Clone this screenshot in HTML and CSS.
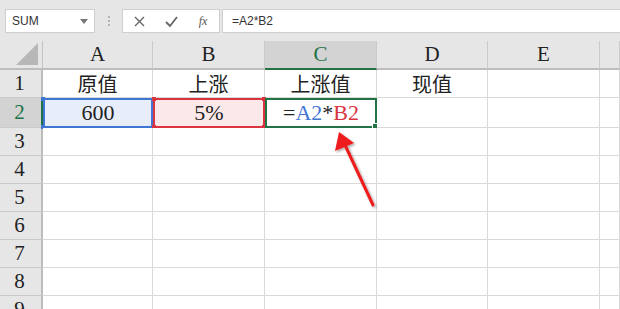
FILE: index.html
```html
<!DOCTYPE html>
<html lang="zh">
<head>
    <meta charset="UTF-8">
    <title>上涨值</title>
    <link rel="stylesheet" href="styles.css">
</head>
<body>
<div class="toolbar">
    <div class="namebox">
        <span>SUM</span>
        <svg class="caret" width="8" height="5" viewBox="0 0 8 5"><path d="M0 0h8L4 5z" fill="#777"/></svg>
    </div>
    <div class="grip"><i></i><i></i><i></i></div>
    <div class="fx-group">
        <span class="fx-btn">
            <svg width="11" height="11" viewBox="0 0 11 11"><path d="M1 1l9 9M10 1l-9 9" stroke="#666" stroke-width="1.4"/></svg>
        </span>
        <span class="fx-btn">
            <svg width="13" height="11" viewBox="0 0 13 11"><path d="M1 6l4 4 7-9" stroke="#666" stroke-width="1.8" fill="none"/></svg>
        </span>
        <span class="fx-btn fx-label">fx</span>
    </div>
    <div class="formula">=A2*B2</div>
</div>

<div class="sheet">
    <div class="corner"><span class="tri"></span></div>
    <div class="col-head">A</div>
    <div class="col-head">B</div>
    <div class="col-head active">C</div>
    <div class="col-head">D</div>
    <div class="col-head">E</div>
    <div class="col-head"></div>

    <div class="row-head">1</div>
    <div class="cell cjk">原值</div>
    <div class="cell cjk">上涨</div>
    <div class="cell cjk">上涨值</div>
    <div class="cell cjk">现值</div>
    <div class="cell"></div>
    <div class="cell"></div>

    <div class="row-head active">2</div>
    <div class="cell ref-a">600</div>
    <div class="cell ref-b">5%</div>
    <div class="cell editing">=<span class="blue">A2</span>*<span class="red">B2</span></div>
    <div class="cell"></div>
    <div class="cell"></div>
    <div class="cell"></div>

    <div class="row-head">3</div>
    <div class="cell"></div><div class="cell"></div><div class="cell"></div><div class="cell"></div><div class="cell"></div><div class="cell"></div>
    <div class="row-head">4</div>
    <div class="cell"></div><div class="cell"></div><div class="cell"></div><div class="cell"></div><div class="cell"></div><div class="cell"></div>
    <div class="row-head">5</div>
    <div class="cell"></div><div class="cell"></div><div class="cell"></div><div class="cell"></div><div class="cell"></div><div class="cell"></div>
    <div class="row-head">6</div>
    <div class="cell"></div><div class="cell"></div><div class="cell"></div><div class="cell"></div><div class="cell"></div><div class="cell"></div>
    <div class="row-head">7</div>
    <div class="cell"></div><div class="cell"></div><div class="cell"></div><div class="cell"></div><div class="cell"></div><div class="cell"></div>
    <div class="row-head">8</div>
    <div class="cell"></div><div class="cell"></div><div class="cell"></div><div class="cell"></div><div class="cell"></div><div class="cell"></div>
    <div class="row-head">9</div>
    <div class="cell"></div><div class="cell"></div><div class="cell"></div><div class="cell"></div><div class="cell"></div><div class="cell"></div>
</div>

<svg class="arrow" width="620" height="309" viewBox="0 0 620 309">
    <defs>
        <filter id="shadow" x="-20%" y="-20%" width="140%" height="140%">
            <feDropShadow dx="1.5" dy="1.5" stdDeviation="1.2" flood-color="#000" flood-opacity="0.35"/>
        </filter>
    </defs>
    <g filter="url(#shadow)">
        <path d="M373 205L345 145" stroke="#ee1c1c" stroke-width="3" stroke-linecap="round"/>
        <path d="M339 132L335 151L354 143z" fill="#ee1c1c"/>
    </g>
</svg>
</body>
</html>
```

FILE: styles.css
```css
html, body {
    margin: 0;
    height: 100%;
    overflow: hidden;
    background: #fff;
}
.toolbar {
    height: 41px;
    box-sizing: border-box;
    padding: 9px 0 0 5px;
    display: flex;
    align-items: flex-start;
    background: #e6e6e6;
    font-family: "Liberation Sans", "Noto Sans CJK SC", sans-serif;
    font-size: 12px;
    color: #333;
}
.namebox {
    width: 90px;
    height: 24px;
    box-sizing: border-box;
    background: #fff;
    border: 1px solid #cfcfcf;
    display: flex;
    align-items: center;
    justify-content: space-between;
    padding: 0 6px 0 6px;
}
.grip {
    width: 27px;
    height: 24px;
    display: flex;
    flex-direction: column;
    align-items: center;
    justify-content: center;
    gap: 2px;
}
.grip i {
    width: 2px;
    height: 2px;
    background: #b5b5b5;
}
.fx-group {
    width: 98px;
    height: 24px;
    box-sizing: border-box;
    background: #fff;
    border: 1px solid #cfcfcf;
    display: flex;
    margin-right: 2px;
}
.fx-btn {
    width: 32px;
    display: flex;
    align-items: center;
    justify-content: center;
}
.fx-label {
    font-family: "Liberation Serif", serif;
    font-style: italic;
    font-size: 12px;
    color: #555;
}
.formula {
    flex: 1;
    height: 24px;
    box-sizing: border-box;
    background: #fff;
    border: 1px solid #cfcfcf;
    border-right: none;
    padding-left: 9px;
    line-height: 22px;
}

.sheet {
    display: grid;
    grid-template-columns: 43px 110px 112px 112px 111px 112px 1fr;
    grid-template-rows: 29px 28px 30px repeat(7, 28px);
    font-family: "Liberation Serif", "Noto Sans CJK SC", serif;
    font-size: 22px;
    color: #222;
}
.sheet > div {
    box-sizing: border-box;
    display: flex;
    align-items: center;
    justify-content: center;
}
.corner {
    background: #e6e6e6;
    border-right: 1px solid #c3c3c3;
    border-bottom: 2px solid #bdbdbd;
    position: relative;
}
.tri {
    position: absolute;
    right: 4px;
    bottom: 3px;
    width: 0;
    height: 0;
    border-left: 22px solid transparent;
    border-bottom: 22px solid #b7b7b7;
}
.col-head {
    background: #e6e6e6;
    border-right: 1px solid #cacaca;
    border-bottom: 2px solid #bdbdbd;
    font-size: 21px;
    color: #222;
}
.col-head.active {
    background: #d3d3d3;
    color: #217346;
    border-bottom-color: #217346;
}
.row-head {
    background: #e6e6e6;
    border-right: 2px solid #bdbdbd;
    border-bottom: 1px solid #cacaca;
    font-size: 21px;
    padding-right: 2px;
}
.row-head.active {
    background: #d3d3d3;
    color: #217346;
    border-right-color: #217346;
}
.cell {
    border-right: 1px solid #d9d9d9;
    border-bottom: 1px solid #d9d9d9;
    background: #fff;
    position: relative;
}
.cjk {
    font-family: "Noto Sans CJK SC", sans-serif;
    font-size: 20px;
    color: #222;
}
.ref-a {
    background: #e7eef9;
    border: 2px solid #3f76d4;
}
.ref-b {
    background: #fbe9ea;
    border: 2px solid #d9343f;
}
.ref-a::before, .ref-a::after,
.ref-b::before, .ref-b::after {
    content: "";
    position: absolute;
    left: -4px;
    width: 4px;
    height: 4px;
}
.ref-a::before, .ref-b::before { top: -3px; }
.ref-a::after, .ref-b::after { bottom: -3px; }
.ref-a::before, .ref-a::after { background: #3f76d4; }
.ref-b::before, .ref-b::after { background: #d9343f; left: -3px; box-shadow: 110px 0 0 #d9343f; }
.editing {
    border: 2px solid #217346;
}
.editing::after {
    content: "";
    position: absolute;
    right: -4px;
    bottom: -4px;
    width: 5px;
    height: 5px;
    background: #217346;
    border: 1px solid #fff;
}
.blue { color: #3f76d4; }
.red { color: #d9343f; }
.arrow {
    position: absolute;
    left: 0;
    top: 0;
    pointer-events: none;
}
```
